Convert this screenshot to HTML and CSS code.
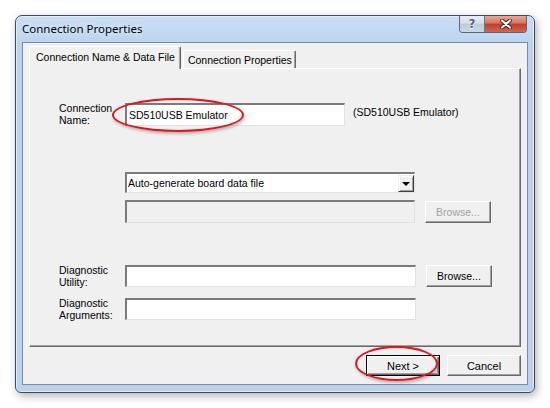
FILE: index.html
```html
<!DOCTYPE html>
<html lang="en">
<head>
  <meta charset="UTF-8">
  <title>Connection Properties</title>
  <link rel="stylesheet" href="styles.css">
</head>
<body>
  <div class="window">
    <div class="titlebar">
      <span class="title">Connection Properties</span>
      <div class="caption-buttons">
        <span class="cap help">?</span>
        <span class="cap close">
          <svg width="12" height="10" viewBox="0 0 12 10">
            <path d="M2 1.5 L10 8.5 M10 1.5 L2 8.5" stroke="#5a1c12" stroke-width="4" stroke-linecap="round"/>
            <path d="M2 1.5 L10 8.5 M10 1.5 L2 8.5" stroke="#fff" stroke-width="2.2" stroke-linecap="round"/>
          </svg>
        </span>
      </div>
    </div>

    <div class="client">
      <div class="tabs">
        <div class="tab active">Connection Name &amp; Data File</div>
        <div class="tab">Connection Properties</div>
      </div>

      <div class="panel">
        <div class="row row-name">
          <label class="label">Connection<br>Name:</label>
          <div class="textbox name-box">SD510USB Emulator</div>
          <span class="hint">(SD510USB Emulator)</span>
        </div>

        <div class="row row-combo">
          <div class="combo">
            <span class="combo-text">Auto-generate board data file</span>
            <span class="combo-arrow"></span>
          </div>
        </div>

        <div class="row row-file">
          <div class="textbox wide disabled"></div>
          <button class="btn browse" disabled>Browse...</button>
        </div>

        <div class="row row-util">
          <label class="label">Diagnostic<br>Utility:</label>
          <div class="textbox wide"></div>
          <button class="btn browse">Browse...</button>
        </div>

        <div class="row row-args">
          <label class="label">Diagnostic<br>Arguments:</label>
          <div class="textbox wide"></div>
        </div>
      </div>

      <div class="actions">
        <button class="btn default">Next &gt;</button>
        <button class="btn">Cancel</button>
      </div>
    </div>
  </div>

  <!-- red annotation rings drawn over the dialog -->
  <div class="mark mark-name"></div>
  <div class="mark mark-next"></div>
</body>
</html>
```

FILE: styles.css
```css
body {
  margin: 0;
  background: #fff;
  font-family: 'Liberation Sans', Arial, sans-serif;
  font-size: 10.5px;
  color: #000;
  position: relative;
  width: 550px;
  height: 408px;
  overflow: hidden;
}
.window {
  box-sizing: border-box;
  margin: 15px 0 0 15px;
  width: 520px;
  height: 378px;
  border: 1px solid #3d4b5b;
  border-radius: 7px 7px 6px 6px;
  background: linear-gradient(180deg, #c9def5 0, #bad4ef 30px, #b9d3ee 100%);
  box-shadow: 2px 3px 8px rgba(0,0,0,0.3), inset 0 0 0 1px rgba(255,255,255,0.55);
  padding: 0 6px 7px 6px;
  display: flex;
  flex-direction: column;
}
.titlebar {
  height: 26px;
  display: flex;
  align-items: flex-start;
  justify-content: space-between;
}
.title {
  font-family: 'Noto Sans', 'Open Sans', sans-serif;
  font-size: 11.5px;
  color: #000;
  margin-top: 5px;
  text-shadow: 0 0 6px rgba(255,255,255,0.9);
}
.caption-buttons {
  display: flex;
  margin-right: 1px;
  border: 1px solid #56677a;
  border-top: none;
  border-radius: 0 0 4px 4px;
  overflow: hidden;
  height: 16px;
}
.cap {
  display: flex;
  align-items: center;
  justify-content: center;
  font-family: 'DejaVu Sans', sans-serif;
  font-weight: bold;
  font-size: 12px;
  line-height: 1;
}
.help {
  width: 24px;
  background: linear-gradient(180deg, #e6eef7 0, #d3dfec 45%, #bccbdc 50%, #c9d7e6 100%);
  color: #56626f;
  border-right: 1px solid #6a7889;
  text-shadow: 0 1px 0 #fff, 0 0 1px #fff;
}
.close {
  width: 41px;
  background: linear-gradient(180deg, #e8a796 0, #d47561 45%, #c23e27 50%, #d0654c 100%);
}
.client {
  flex: 1;
  background: #f0f0f0;
  border: 1px solid #7b8b9c;
  padding: 4px 6px 0 6px;
  display: flex;
  flex-direction: column;
}
.tabs {
  display: flex;
  align-items: flex-end;
  height: 22px;
  position: relative;
  z-index: 1;
  margin-bottom: -1px;
}
.tab {
  box-sizing: border-box;
  height: 18px;
  padding: 3px 3px 0 4px;
  background: #f0f0f0;
  border-top: 1px solid #fff;
  border-left: 1px solid #fff;
  border-right: 1px solid #696969;
  box-shadow: inset -1px 0 0 #a0a0a0;
  border-radius: 2px 2px 0 0;
  margin-bottom: 1px;
}
.tab.active {
  height: 23px;
  padding: 4px 5px 0 6px;
  margin-bottom: 0;
  margin-right: 2px;
}
.panel {
  box-sizing: border-box;
  height: 279px;
  border-top: 1px solid #fff;
  border-left: 1px solid #fff;
  border-right: 1px solid #696969;
  border-bottom: 1px solid #696969;
  box-shadow: inset -1px -1px 0 #a0a0a0;
  padding: 33px 0 0 29px;
  display: flex;
  flex-direction: column;
}
.row {
  display: flex;
  align-items: center;
}
.label {
  width: 66px;
  line-height: 12px;
  flex-shrink: 0;
}
.textbox {
  box-sizing: border-box;
  height: 23px;
  background: #fff;
  border-top: 2px solid #7a7a7a;
  border-left: 2px solid #7a7a7a;
  border-right: 1px solid #e3e3e3;
  border-bottom: 1px solid #e3e3e3;
  padding: 3px 2px;
  line-height: 15px;
}
.name-box {
  width: 220px;
}
.hint {
  align-self: flex-start;
  margin: 4px 0 0 8px;
}
.row-combo {
  margin: 46px 0 0 66px;
}
.combo {
  box-sizing: border-box;
  width: 290px;
  height: 21px;
  background: #fff;
  border-top: 2px solid #7a7a7a;
  border-left: 2px solid #7a7a7a;
  border-right: 1px solid #e3e3e3;
  border-bottom: 1px solid #e3e3e3;
  display: flex;
  align-items: center;
  justify-content: space-between;
  padding-left: 1px;
}
.combo-text {
  line-height: 14px;
}
.combo-arrow {
  box-sizing: border-box;
  width: 16px;
  height: 17px;
  background: #f0f0f0;
  border-top: 1px solid #f0f0f0;
  border-left: 1px solid #f0f0f0;
  border-right: 1px solid #404040;
  border-bottom: 1px solid #404040;
  box-shadow: inset 1px 1px 0 #fff, inset -1px -1px 0 #a0a0a0;
  position: relative;
}
.combo-arrow::after {
  content: "";
  position: absolute;
  left: 3px;
  top: 6px;
  border-left: 4px solid transparent;
  border-right: 4px solid transparent;
  border-top: 4px solid #000;
}
.row-file {
  margin: 7px 0 0 66px;
}
.wide {
  width: 290px;
}
.disabled {
  background: #f0f0f0;
}
.btn {
  box-sizing: border-box;
  font-family: 'Liberation Sans', Arial, sans-serif;
  font-size: 10.5px;
  height: 22px;
  background: #f0f0f0;
  color: #000;
  border-top: 1px solid #fff;
  border-left: 1px solid #fff;
  border-right: 1px solid #696969;
  border-bottom: 1px solid #696969;
  box-shadow: inset -1px -1px 0 #a0a0a0;
  padding: 0;
  margin: 0;
}
.browse {
  width: 66px;
  margin-left: 10px;
}
.btn:disabled {
  color: #a0a0a0;
}
.row-util {
  margin-top: 41px;
}
.row-util .wide,
.row-args .wide {
  width: 291px;
  height: 22px;
}
.row-args {
  margin-top: 9px;
}
.actions {
  display: flex;
  justify-content: flex-end;
  gap: 7px;
  margin-top: 8px;
}
.actions .btn {
  width: 74px;
  height: 21px;
  font-size: 11px;
}
.btn.default {
  border: 1px solid #000;
  box-shadow: inset 1px 1px 0 #fff, inset -1px -1px 0 #696969, inset -2px -2px 0 #a0a0a0;
}
.mark {
  position: absolute;
  box-sizing: border-box;
  border: 2.5px solid #e3141c;
  border-radius: 50%;
  box-shadow: 1px 2px 3px rgba(0,0,0,0.25);
}
.mark-name {
  left: 112px;
  top: 98px;
  width: 132px;
  height: 34px;
}
.mark-next {
  left: 355px;
  top: 346px;
  width: 83px;
  height: 35px;
}
```
